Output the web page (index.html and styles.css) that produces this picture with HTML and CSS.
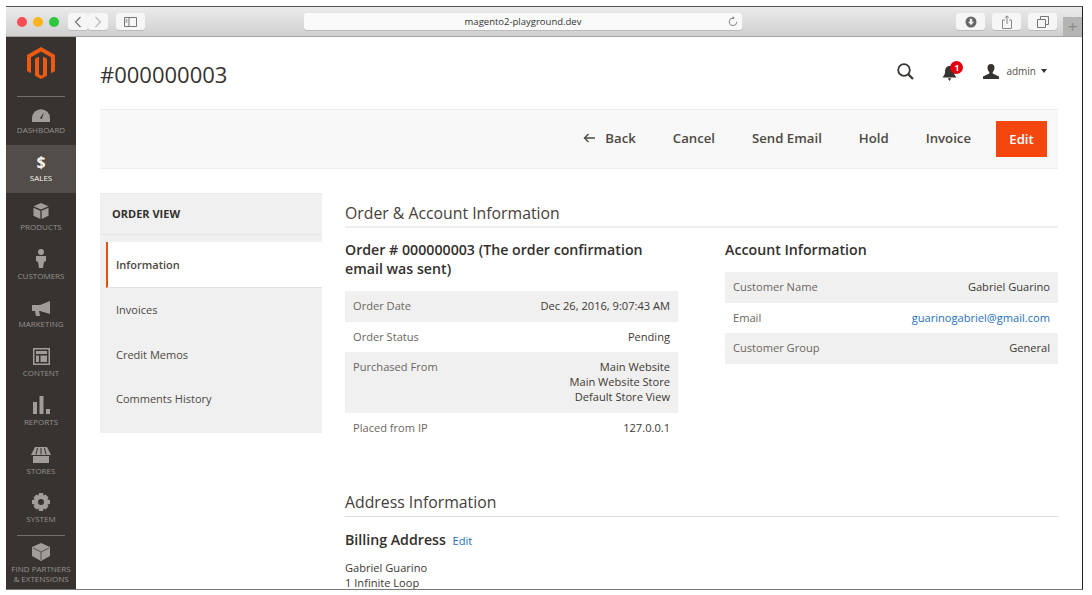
FILE: index.html
```html
<!DOCTYPE html>
<html lang="en">
<head>
  <meta charset="UTF-8">
  <title>magento2-playground.dev</title>
  <link rel="stylesheet" href="styles.css">
</head>
<body>

  <div class="window">
    <div class="toolbar">
      <div class="lights">
        <span class="light red"></span>
        <span class="light yellow"></span>
        <span class="light green"></span>
      </div>
      <div class="nav-btns">
        <span class="tool-btn nav"><svg width="8" height="12" viewBox="0 0 8 12"><path d="M6.5 1 1.5 6l5 5" fill="none" stroke="#777" stroke-width="1.2"/></svg></span>
        <span class="tool-btn nav"><svg width="8" height="12" viewBox="0 0 8 12"><path d="M1.5 1l5 5-5 5" fill="none" stroke="#bbb" stroke-width="1.2"/></svg></span>
      </div>
      <span class="tool-btn side-btn"><svg width="13" height="10" viewBox="0 0 13 10"><path d="M.5.5h12v9H.5zM5 .5v9M1.5 3h2M1.5 5h2" fill="none" stroke="#777"/></svg></span>
      <div class="url-bar">
        <span class="url">magento2-playground.dev</span>
        <svg class="reload" width="10" height="11" viewBox="0 0 10 11"><path d="M5 2a3.8 3.8 0 1 0 3.8 3.8" fill="none" stroke="#888"/><path d="M4.6.2 7 2 4.6 3.6z" fill="#888"/></svg>
      </div>
      <div class="right-btns">
        <span class="tool-btn wide"><svg width="12" height="12" viewBox="0 0 12 12"><circle cx="6" cy="6" r="5.5" fill="#666"/><path d="M4.8 2.8h2.4v3H9L6 9.2 3 5.8h1.8z" fill="#eee"/></svg></span>
        <span class="tool-btn wide"><svg width="10" height="14" viewBox="0 0 10 14"><path d="M3 5H.5v8.5h9V5H7M5 9V1M3 2.8 5 .8l2 2" fill="none" stroke="#888"/></svg></span>
        <span class="tool-btn wide"><svg width="12" height="12" viewBox="0 0 12 12"><path d="M.5 3.5h8v8h-8zM3.5 3.5v-3h8v8h-3" fill="none" stroke="#777"/></svg></span>
      </div>
      <span class="new-tab">+</span>
    </div>

    <div class="app">
      <nav class="sidebar">
        <div class="logo">
          <svg width="28" height="32" viewBox="0 0 28 32"><path d="M14 0 28 8v16l-4 2.3V10.3L14 4.5 4 10.3v16L0 24V8zM12 9.5l-4 2.3v17L14 32l6-3.2v-17l-4-2.3v18.5L14 28.5l-2-1.5z" fill="#ee5a12"/></svg>
        </div>
        <a class="nav-item">
          <svg width="18" height="13" viewBox="0 0 24 17"><path d="M12 0a12 12 0 0 1 12 12v5H0v-5A12 12 0 0 1 12 0z" fill="#a09c98"/><path d="M10.5 12 16 4l-3 9z" fill="#373330"/></svg>
          <span>DASHBOARD</span>
        </a>
        <a class="nav-item current">
          <span class="dollar">$</span>
          <span>SALES</span>
        </a>
        <a class="nav-item">
          <svg width="16" height="16" viewBox="0 0 16 17"><path d="M8 0l8 3.5-8 3.5L0 3.5zM0 5l7.3 3.2V17L0 13.5zM16 5 8.7 8.2V17l7.3-3.5z" fill="#a09c98"/></svg>
          <span>PRODUCTS</span>
        </a>
        <a class="nav-item">
          <svg width="10" height="19" viewBox="0 0 10 19"><circle cx="5" cy="3" r="3" fill="#a09c98"/><path d="M0 7h10v5L8 13l-1 6H3l-1-6-2-1z" fill="#a09c98"/></svg>
          <span>CUSTOMERS</span>
        </a>
        <a class="nav-item">
          <svg width="18" height="15" viewBox="0 0 18 15"><path d="M18 0v13L8 10H7l1 5H4L3 10H0V4h8z" fill="#a09c98"/></svg>
          <span>MARKETING</span>
        </a>
        <a class="nav-item">
          <svg width="17" height="17" viewBox="0 0 17 17"><path d="M0 0h17v17H0zM1.5 1.5v14h14v-14zM3 3h11v3H3zM3 7.5h3V14H3zM7.5 7.5H14V14H7.5z" fill="#a09c98" fill-rule="evenodd"/></svg>
          <span>CONTENT</span>
        </a>
        <a class="nav-item">
          <svg width="17" height="18" viewBox="0 0 17 18"><path d="M0 6h4v12H0zM6.5 0h4v18h-4zM13 13h4v5h-4z" fill="#a09c98"/></svg>
          <span>REPORTS</span>
        </a>
        <a class="nav-item">
          <svg width="20" height="16" viewBox="0 0 20 16"><path d="M4 0h12l4 8H0zM2 9h16v7H2z" fill="#a09c98"/><path d="M6.5 1 5 7.5M10 1v6.5M13.5 1 15 7.5" stroke="#373330"/></svg>
          <span>STORES</span>
        </a>
        <a class="nav-item">
          <svg width="18" height="18" viewBox="0 0 18 18"><path d="M7 0h4l.5 2.6 2-1.100 3 3-1.100 2L18 7v4l-2.600.5 1.100 2-3 3-2-1.100L11 18H7l-.5-2.600-2 1.100-3-3 1.100-2L0 11V7l2.600-.5-1.100-2 3-3 2 1.100zM9 6a3 3 0 1 0 0 6 3 3 0 0 0 0-6z" fill="#a09c98" fill-rule="evenodd"/></svg>
          <span>SYSTEM</span>
        </a>
        <a class="nav-item partners">
          <svg width="18" height="18" viewBox="0 0 18 18"><path d="M9 0l9 4v9l-9 5-9-5V4z" fill="#a09c98"/><path d="M1 5l8 4 8-4M9 9v8" fill="none" stroke="#373330" stroke-width=".7"/></svg>
          <span>FIND PARTNERS<br>&amp; EXTENSIONS</span>
        </a>
      </nav>

      <main class="page">
        <header class="page-head">
          <h1>#000000003</h1>
          <div class="head-tools">
            <svg class="search" width="17" height="17" viewBox="0 0 17 17"><circle cx="7" cy="7" r="5.8" fill="none" stroke="#373330" stroke-width="1.8"/><path d="M11 11l5 5" stroke="#373330" stroke-width="2.2"/></svg>
            <div class="bell">
              <svg width="15" height="15" viewBox="0 0 16 17"><path d="M8 0c3.5 0 5 3 5 6 0 3 1 5 3 7H0c2-2 3-4 3-7 0-3 1.5-6 5-6zM6 14h4l-2 3z" fill="#373330"/></svg>
              <span class="badge">1</span>
            </div>
            <svg class="user" width="16" height="15" viewBox="0 0 16 15"><path d="M8 0c2.3 0 3.5 1.6 3.500 3.800 0 1.800-.8 3.400-1.800 4.200v1.500L16 12.500V15H0v-2.500l6.300-3V8c-1-.8-1.800-2.400-1.800-4.200C4.500 1.600 5.700 0 8 0z" fill="#373330"/></svg>
            <span class="admin">admin</span>
            <span class="caret"></span>
          </div>
        </header>

        <div class="actions">
          <button class="action"><svg class="arrow" width="12" height="10" viewBox="0 0 12 10"><path d="M12 5H1.500M5.500 1 1.500 5l4 4" fill="none" stroke="#4d4843" stroke-width="1.4"/></svg>Back</button>
          <button class="action">Cancel</button>
          <button class="action">Send Email</button>
          <button class="action">Hold</button>
          <button class="action">Invoice</button>
          <button class="action primary">Edit</button>
        </div>

        <div class="columns">
          <aside class="tabs">
            <div class="tabs-title">ORDER VIEW</div>
            <a class="tab active">Information</a>
            <a class="tab">Invoices</a>
            <a class="tab">Credit Memos</a>
            <a class="tab">Comments History</a>
          </aside>

          <div class="content">
            <h2>Order &amp; Account Information</h2>
            <div class="info-cols">
              <section class="info-col">
                <h3>Order # 000000003 (The order confirmation email was sent)</h3>
                <div class="rows">
                  <div class="row"><span class="key">Order Date</span><span class="val">Dec 26, 2016, 9:07:43 AM</span></div>
                  <div class="row"><span class="key">Order Status</span><span class="val">Pending</span></div>
                  <div class="row"><span class="key">Purchased From</span><span class="val">Main Website<br>Main Website Store<br>Default Store View</span></div>
                  <div class="row"><span class="key">Placed from IP</span><span class="val">127.0.0.1</span></div>
                </div>
              </section>
              <section class="info-col">
                <h3>Account Information</h3>
                <div class="rows">
                  <div class="row"><span class="key">Customer Name</span><span class="val">Gabriel Guarino</span></div>
                  <div class="row"><span class="key">Email</span><a class="val link">guarinogabriel@gmail.com</a></div>
                  <div class="row"><span class="key">Customer Group</span><span class="val">General</span></div>
                </div>
              </section>
            </div>

            <h2 class="address-title">Address Information</h2>
            <h3 class="billing">Billing Address <a class="edit">Edit</a></h3>
            <p class="address">Gabriel Guarino<br>1 Infinite Loop</p>
          </div>
        </div>
      </main>
    </div>
  </div>

</body>
</html>
```
FILE: styles.css
```css
* {
  box-sizing: border-box;
}

html, body {
  height: 100%;
}

body {
  margin: 0;
  background: #fff;
  font-family: "Open Sans", Arial, sans-serif;
  color: #373330;
  overflow: hidden;
}

.window {
  margin: 6px 0 0 6px;
  width: 1077px;
  height: 584px;
  border-top: 1px solid #555;
  border-right: 1px solid #222;
  border-bottom: 1px solid #777;
  overflow: hidden;
  display: flex;
  flex-direction: column;
}

/* browser chrome */
.toolbar {
  height: 30px;
  flex: none;
  display: flex;
  align-items: center;
  background: linear-gradient(#ebebeb, #d0d0d0);
  border-bottom: 1px solid #a5a5a5;
  padding-left: 11px;
}

.lights {
  display: flex;
  gap: 6px;
  margin-right: 9px;
}

.light {
  width: 10px;
  height: 10px;
  border-radius: 50%;
}

.light.red { background: #fa4d56; }
.light.yellow { background: #fcb41e; }
.light.green { background: #2ec83e; }

.nav-btns {
  display: flex;
  margin-right: 8px;
}

.tool-btn {
  height: 17px;
  background: #f6f6f6;
  border-radius: 3px;
  box-shadow: 0 1px 0 #bbb;
  display: flex;
  align-items: center;
  justify-content: center;
}

.tool-btn.nav { width: 20px; }
.side-btn { width: 29px; }
.tool-btn.wide { width: 29px; }

.url-bar {
  width: 439px;
  height: 17px;
  margin-left: 159px;
  background: #fafafa;
  border-radius: 3px;
  box-shadow: 0 1px 0 #bbb;
  display: flex;
  align-items: center;
  justify-content: center;
  position: relative;
}

.url {
  font-size: 9.5px;
  color: #333;
}

.reload {
  position: absolute;
  right: 4px;
  top: 3px;
}

.right-btns {
  display: flex;
  gap: 7px;
  margin-left: 214px;
}

.new-tab {
  align-self: flex-end;
  width: 19px;
  height: 19px;
  margin-left: 6px;
  background: #b4b4b4;
  color: #8a8a8a;
  text-align: center;
  font-size: 17px;
  line-height: 20px;
}

.app {
  flex: 1;
  min-height: 0;
  display: flex;
}

/* admin menu */
.sidebar {
  width: 70px;
  flex: none;
  background: #373330;
  display: flex;
  flex-direction: column;
}

.logo {
  height: 60px;
  flex: none;
  margin: 0 11px -1px;
  border-bottom: 1px solid #736e69;
  display: flex;
  justify-content: center;
  padding-top: 10px;
}

.nav-item {
  height: 48.7px;
  flex: none;
  display: flex;
  flex-direction: column;
  align-items: center;
  justify-content: flex-end;
  gap: 3px;
  padding-bottom: 10px;
  color: #96928e;
  font-size: 8px;
  line-height: 10px;
  text-align: center;
}

.nav-item.current {
  background: #514d48;
  color: #f7f3eb;
  gap: 0;
}

.dollar {
  font-size: 16px;
  font-weight: 700;
  line-height: 22px;
}

.nav-item.partners {
  position: relative;
  height: 55px;
  padding-bottom: 5px;
  white-space: nowrap;
}

.nav-item.partners::before {
  content: "";
  position: absolute;
  top: 1px;
  left: 11px;
  right: 11px;
  height: 1px;
  background: #736e69;
}

/* page */
.page {
  flex: 1;
  min-width: 0;
  padding: 0 24px;
}

.page-head {
  height: 72px;
  display: flex;
  align-items: center;
  justify-content: space-between;
}

h1 {
  margin: 0;
  font-size: 22px;
  font-weight: 400;
  padding-top: 1px;
}

.head-tools {
  display: flex;
  align-items: center;
  padding: 0 11px 4px 0;
}

.search {
  margin-right: 28px;
}

.bell {
  position: relative;
  width: 17px;
  height: 15px;
  margin-right: 24px;
  margin-top: 1px;
}

.badge {
  position: absolute;
  top: -3px;
  left: 8px;
  width: 13px;
  height: 13px;
  border-radius: 50%;
  background: #e3000f;
  color: #fff;
  font-size: 8.5px;
  font-weight: 700;
  line-height: 13px;
  text-align: center;
}

.user {
  margin-right: 7px;
}

.admin {
  font-size: 10px;
  color: #55504b;
  margin-right: 5px;
}

.caret {
  border: 3px solid transparent;
  border-top: 4px solid #373330;
  border-bottom: 0;
}

.actions {
  height: 60px;
  background: #f8f8f8;
  border-top: 1px solid #eee;
  border-bottom: 1px solid #eee;
  display: flex;
  align-items: center;
  justify-content: flex-end;
  gap: 37px;
  padding-right: 11px;
}

.action {
  border: 0;
  padding: 0;
  margin-bottom: 2px;
  background: none;
  font-family: inherit;
  font-size: 13.2px;
  font-weight: 600;
  color: #4d4843;
}

.arrow {
  margin-right: 10px;
}

.action.primary {
  width: 51px;
  height: 36px;
  background: #f4470f;
  color: #fff;
  margin: 0 0 0 -12px;
}

.columns {
  display: flex;
  align-items: flex-start;
  gap: 23px;
  margin-top: 24px;
}

.tabs {
  width: 222px;
  height: 240px;
  flex: none;
  background: #f0f0f0;
  border-top: 1px solid #eaeaea;
}

.tabs-title {
  height: 41px;
  padding-left: 12px;
  border-bottom: 1px solid #e6e6e6;
  font-size: 11px;
  font-weight: 700;
  line-height: 40px;
  color: #33302d;
}

.tab {
  display: block;
  height: 44.7px;
  padding-left: 16px;
  font-size: 11px;
  line-height: 44px;
  color: #4d4843;
}

.tab.active {
  height: 46px;
  margin: 7px 0 0 6px;
  padding-left: 8px;
  background: #fff;
  border-left: 2px solid #e8500f;
  border-bottom: 1px solid #e2e2e2;
  font-weight: 600;
  line-height: 46px;
}

.content {
  flex: 1;
  min-width: 0;
}

h2 {
  margin: 0;
  height: 35px;
  border-bottom: 2px solid #eee;
  font-size: 15.8px;
  font-weight: 400;
  line-height: 40px;
  color: #45403b;
}

.info-cols {
  display: flex;
  justify-content: space-between;
  margin-top: 12px;
}

.info-col {
  width: 333px;
}

h3 {
  margin: 0;
  font-size: 14.2px;
  font-weight: 600;
  line-height: 19px;
  color: #33302d;
}

.info-col h3 {
  margin-bottom: 13px;
}

.rows .row:nth-child(odd) {
  background: #f0f0f0;
}

.row {
  display: flex;
  justify-content: space-between;
  padding: 7px 8px 8.5px;
  font-size: 11.1px;
  line-height: 15px;
}

.key {
  color: #6b6661;
}

.val {
  text-align: right;
  color: #3d3833;
}

.val.link,
.edit {
  color: #1d6fbb;
}

.address-title {
  margin-top: 44px;
  height: 30px;
  border-bottom: 1px solid #ddd;
  line-height: 30px;
}

.billing {
  margin-top: 13px;
}

.edit {
  margin-left: 3px;
  font-size: 11.1px;
  font-weight: 400;
}

.address {
  margin: 10px 0 0;
  font-size: 11.1px;
  line-height: 15px;
  color: #3d3833;
}
```
